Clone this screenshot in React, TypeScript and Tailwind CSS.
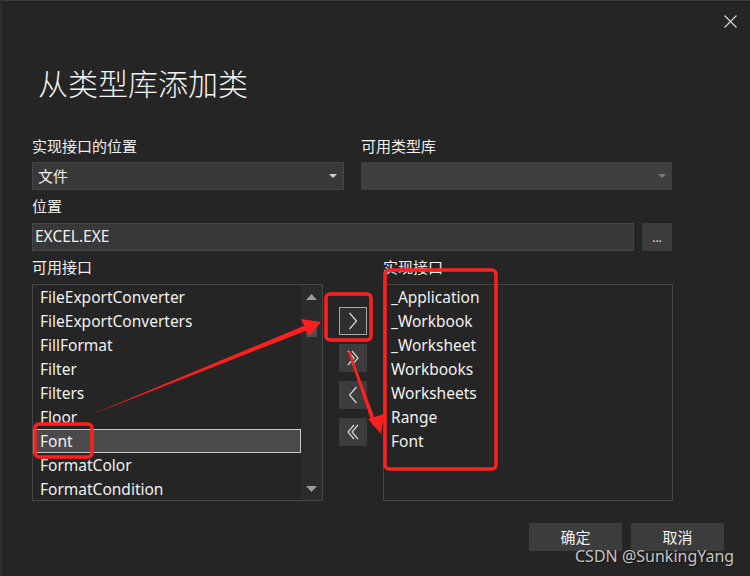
import { ReactNode } from "react";

const latin = "font-['Noto_Sans','Noto_Sans_CJK_SC',sans-serif]";
const cjk = "font-['Noto_Sans_CJK_SC','Noto_Sans',sans-serif]";

const available = [
  "FileExportConverter",
  "FileExportConverters",
  "FillFormat",
  "Filter",
  "Filters",
  "Floor",
  "Font",
  "FormatColor",
  "FormatCondition",
];

const implemented = ["_Application", "_Workbook", "_Worksheet", "Workbooks", "Worksheets", "Range", "Font"];

const Label = ({ children, className = "" }: { children: ReactNode; className?: string }) => (
  <div className={`h-[20px] leading-[20px] text-[15px] text-[#f0f0f0] ${cjk} ${className}`}>{children}</div>
);

const Caret = ({ color }: { color: string }) => (
  <svg width="8" height="4" viewBox="0 0 8 4" className="shrink-0">
    <path d="M0 0 H8 L4 4 Z" fill={color} />
  </svg>
);

const Chevron = ({ dir, double }: { dir: "left" | "right"; double?: boolean }) => {
  const r = dir === "right";
  return (
    <svg width="16" height="18" viewBox="0 0 16 18" fill="none" stroke="#d8d8d8" strokeWidth="1.2">
      {double ? (
        r ? (
          <>
            <path d="M3 2 L9 9 L3 16" />
            <path d="M7 2 L13 9 L7 16" />
          </>
        ) : (
          <>
            <path d="M13 2 L7 9 L13 16" />
            <path d="M9 2 L3 9 L9 16" />
          </>
        )
      ) : r ? (
        <path d="M4.5 1 L11.5 9 L4.5 17" />
      ) : (
        <path d="M11.5 1 L4.5 9 L11.5 17" />
      )}
    </svg>
  );
};

const MoveButton = ({ children, focused }: { children: ReactNode; focused?: boolean }) => (
  <div
    className={`w-[28px] h-[28px] flex items-center justify-center ${
      focused ? "bg-[#2f2f2f] border border-[#a8a8a8]" : "bg-[#3c3c3c]"
    }`}
  >
    {children}
  </div>
);

export default function App() {
  return (
    <div className="relative w-[750px] h-[576px] overflow-hidden bg-[#252525] border-t border-t-[#3c3c3c] border-l-2 border-l-[#2e2e2e]">
      {/* header */}
      <div className="h-[39px] flex justify-end items-start pt-[14px] pr-[13px]">
        <svg width="13" height="13" viewBox="0 0 13 13" stroke="#dcdcdc" strokeWidth="1.1">
          <path d="M0.5 0.5 L12.5 12.5 M12.5 0.5 L0.5 12.5" />
        </svg>
      </div>

      <div className="pl-[30px] pr-[77px]">
        <h1 className={`mt-[18px] pl-[6px] h-[48px] leading-[48px] text-[30px] font-light text-[#f4f4f4] ${cjk}`}>
          从类型库添加类
        </h1>

        {/* type library location */}
        <div className="mt-[30px] flex gap-[17px]">
          <div className="w-[312px]">
            <Label>实现接口的位置</Label>
            <div className="mt-[6px] h-[28px] bg-[#383838] border border-[#464646] flex items-center justify-between pl-[5px] pr-[6px]">
              <span className={`text-[15px] text-[#f0f0f0] ${cjk}`}>文件</span>
              <Caret color="#d0d0d0" />
            </div>
          </div>
          <div className="w-[311px]">
            <Label>可用类型库</Label>
            <div className="mt-[6px] h-[28px] bg-[#3f3f3f] flex items-center justify-end pr-[6px]">
              <Caret color="#7a7a7a" />
            </div>
          </div>
        </div>

        {/* location */}
        <Label className="mt-[6px]">位置</Label>
        <div className="mt-[7px] flex gap-[8px]">
          <div className={`w-[602px] h-[28px] bg-[#383838] border border-[#464646] flex items-center pl-[2px] text-[15.5px] text-[#f0f0f0] ${latin}`}>
            EXCEL.EXE
          </div>
          <div className={`w-[30px] h-[28px] bg-[#3c3c3c] flex items-end justify-center pb-[7px] text-[12px] leading-none text-[#e8e8e8] ${latin}`}>
            ...
          </div>
        </div>

        {/* interface lists */}
        <div className="mt-[6px] flex gap-[16px]">
          <div className="w-[291px]">
            <Label>可用接口</Label>
            <div className="mt-[7px] h-[217px] border border-[#454545] flex">
              <div className="flex-1">
                {available.map((name) => (
                  <div
                    key={name}
                    className={`h-[24px] leading-[22px] pl-[6px] text-[15.5px] text-[#f0f0f0] ${latin} ${
                      name === "Font" ? "bg-[#4a4a4a] border border-[#c8c8c8]" : "border border-transparent"
                    }`}
                  >
                    {name}
                  </div>
                ))}
              </div>
              <div className="w-[21px] bg-[#2b2b2b] flex flex-col items-center pt-[9px] pb-[8px]">
                <svg width="11" height="6" viewBox="0 0 11 6">
                  <path d="M5.5 0 L11 6 H0 Z" fill="#9a9a9a" />
                </svg>
                <div className="mt-[26px] w-[11px] h-[11px] bg-[#4e4e4e]" />
                <div className="flex-1" />
                <svg width="11" height="6" viewBox="0 0 11 6">
                  <path d="M0 0 H11 L5.5 6 Z" fill="#9a9a9a" />
                </svg>
              </div>
            </div>
          </div>

          <div className="pt-[50px] flex flex-col gap-[9px]">
            <MoveButton focused>
              <Chevron dir="right" />
            </MoveButton>
            <MoveButton>
              <Chevron dir="right" double />
            </MoveButton>
            <MoveButton>
              <Chevron dir="left" />
            </MoveButton>
            <MoveButton>
              <Chevron dir="left" double />
            </MoveButton>
          </div>

          <div className="w-[290px]">
            <Label>实现接口</Label>
            <div className="mt-[7px] h-[217px] border border-[#454545] pt-[1px]">
              {implemented.map((name) => (
                <div key={name} className={`h-[24px] leading-[22px] pl-[7px] text-[15.5px] text-[#f0f0f0] ${latin}`}>
                  {name}
                </div>
              ))}
            </div>
          </div>
        </div>
      </div>

      {/* footer buttons */}
      <div className="mt-[22px] flex justify-end gap-[9px] pr-[26px]">
        <div className={`w-[93px] h-[28px] bg-[#3c3c3c] flex items-center justify-center text-[15px] text-[#f0f0f0] ${cjk}`}>
          确定
        </div>
        <div className={`w-[93px] h-[28px] bg-[#3c3c3c] flex items-center justify-center text-[15px] text-[#f0f0f0] ${cjk}`}>
          取消
        </div>
      </div>

      {/* watermark */}
      <div
        className={`absolute left-[573px] top-[545px] text-[16px] leading-[20px] text-[#c4c4c4] [text-shadow:1px_1px_1px_#111] ${latin}`}
      >
        CSDN @SunkingYang
      </div>

      {/* red annotations */}
      <svg className="absolute inset-0 pointer-events-none" width="750" height="576" viewBox="0 0 750 576">
        <g fill="none" stroke="#ff1f1f" strokeWidth="3.5">
          <rect x="33" y="423" width="57" height="33" rx="4" />
          <rect x="324" y="293" width="45" height="46" rx="4" />
          <rect x="383" y="269" width="111" height="199" rx="4" />
        </g>
        <g fill="#ff1f1f">
          <polygon points="86,415 304,324 306,329" />
          <polygon points="319,321 299,318 307,335" />
          <polygon points="346,351 348,350 375,424 371,425" />
          <polygon points="379,433 366,418 382,413" />
        </g>
      </svg>
    </div>
  );
}
